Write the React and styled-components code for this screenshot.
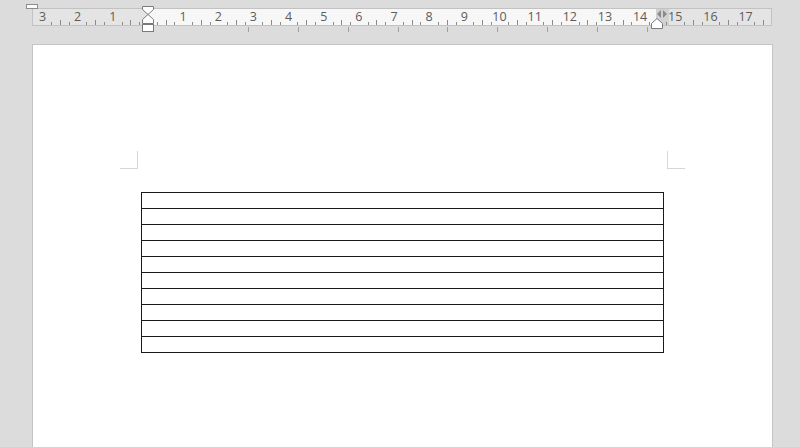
import React from 'react';
import styled, { createGlobalStyle } from 'styled-components';

const CM = 35.15;
const ZERO = 148;
const ROWS = 10;

const GlobalStyle = createGlobalStyle`
    html, body {
        margin: 0;
        padding: 0;
        background: #dcdcdc;
        overflow: hidden;
    }
    body {
        font-family: "Segoe UI", "Open Sans", "Liberation Sans", sans-serif;
    }
`;

function Ruler() {
    const ticks = [];
    for (let k = -12; k <= 17 * 4 + 3; k++) {
        const x = ZERO + (k * CM) / 4;
        if (x < 33 || x > 771) continue;
        if (k % 4 === 0) continue;
        const half = Math.abs(k % 4) === 2;
        ticks.push(
            <line key={k} x1={Math.round(x) + 0.5} x2={Math.round(x) + 0.5} y1={half ? 20 : 22} y2={25} stroke="#8a8a8a" strokeWidth="1" />
        );
    }

    const numbers = [];
    for (let n = -3; n <= 17; n++) {
        if (n === 0) continue;
        numbers.push(
            <text key={n} x={ZERO + n * CM} y={21} textAnchor="middle" fontSize="12.5" fill="#5c5c5c">
                {Math.abs(n)}
            </text>
        );
    }

    const tabs = [];
    for (let k = 2; k <= 10; k++) {
        const x = Math.round(ZERO + k * 49.9) + 0.5;
        tabs.push(<line key={k} x1={x} x2={x} y1={27} y2={32} stroke="#a0a0a0" />);
    }

    return (
        <RulerBar>
            <svg width="800" height="36" viewBox="0 0 800 36" fontFamily="'Segoe UI', 'Open Sans', 'Liberation Sans', sans-serif">
                {/* margin areas and text area */}
                <rect x="32" y="8" width="740" height="18" fill="#e4e4e4" />
                <rect x="148" y="8" width="509" height="18" fill="#f7f7f7" />
                <rect x="656" y="8" width="13" height="18" fill="#d2d2d2" />
                <rect x="32.5" y="8.5" width="739" height="17" fill="none" stroke="#c2c2c2" />
                {ticks}
                {numbers}
                {tabs}

                {/* tab selector */}
                <rect x="26.5" y="4.5" width="11" height="4" fill="#fafafa" stroke="#8c8c8c" />

                {/* table column move arrows */}
                <polygon points="657,14 661,10 661,18" fill="#8a8a8a" />
                <polygon points="663,10 667,14 663,18" fill="#8a8a8a" />

                {/* left indent hourglass */}
                <polygon points="142.5,6.5 153.5,6.5 153.5,9.5 148,14.5 142.5,9.5" fill="#fff" stroke="#7a7a7a" />
                <polygon points="148,14.5 153.5,19.5 153.5,23.5 142.5,23.5 142.5,19.5" fill="#fff" stroke="#7a7a7a" />
                <rect x="142.5" y="24.5" width="11" height="7" fill="#fff" stroke="#7a7a7a" />

                {/* right indent */}
                <polygon points="651.5,28.5 651.5,23.5 657,18.5 662.5,23.5 662.5,28.5" fill="#fff" stroke="#7a7a7a" />
            </svg>
        </RulerBar>
    );
}

export default function App() {
    const rows = Array.from({ length: ROWS }, (_, i) => i);
    return (
        <>
            <GlobalStyle />
            <Workspace>
                <Ruler />
                <Page>
                    <MarginMarks>
                        <CornerMark side="left" />
                        <CornerMark side="right" />
                    </MarginMarks>
                    <Table>
                        {rows.map(i => (
                            <Row key={i} />
                        ))}
                    </Table>
                </Page>
            </Workspace>
        </>
    );
}

// Styled-components

const Workspace = styled.div`
    display: flex;
    flex-direction: column;
    height: 447px;
    overflow: hidden;
    background: #dcdcdc;
`;

const RulerBar = styled.div`
    height: 36px;
    flex: none;
    svg {
        display: block;
    }
`;

const Page = styled.div`
    flex: none;
    margin: 8px 0 0 32px;
    width: 739px;
    height: 600px;
    background: #fff;
    border: 1px solid #c4c4c4;
    display: flex;
    flex-direction: column;
`;

const MarginMarks = styled.div`
    margin-top: 106px;
    padding: 0 87px 0 87px;
    display: flex;
    justify-content: space-between;
`;

const CornerMark = styled.div`
    width: 17px;
    height: 17px;
    border-bottom: 1px solid #d6d6d6;
    ${({ side }) =>
        side === 'left'
            ? 'border-right: 1px solid #d6d6d6;'
            : 'border-left: 1px solid #d6d6d6;'}
`;

const Table = styled.div`
    margin: 23px 0 0 108px;
    width: 521px;
    border: 1px solid #1a1a1a;
    border-bottom: none;
    display: flex;
    flex-direction: column;
`;

const Row = styled.div`
    height: 16px;
    box-sizing: border-box;
    border-bottom: 1px solid #1a1a1a;
`;
